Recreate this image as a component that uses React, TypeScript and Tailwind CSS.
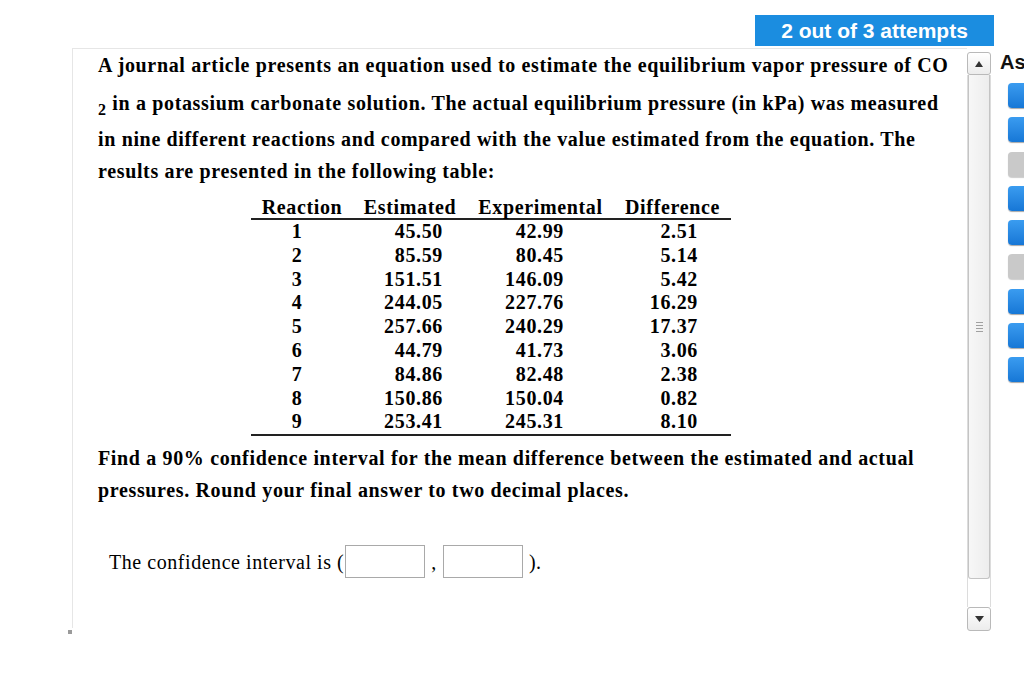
const rows = [
  ['1', '45.50', '42.99', '2.51'],
  ['2', '85.59', '80.45', '5.14'],
  ['3', '151.51', '146.09', '5.42'],
  ['4', '244.05', '227.76', '16.29'],
  ['5', '257.66', '240.29', '17.37'],
  ['6', '44.79', '41.73', '3.06'],
  ['7', '84.86', '82.48', '2.38'],
  ['8', '150.86', '150.04', '0.82'],
  ['9', '253.41', '245.31', '8.10'],
]

const sideButtons = ['blue', 'blue', 'gray', 'blue', 'blue', 'gray', 'blue', 'blue', 'blue']

function Scrollbar() {
  return (
    <div className="mt-[4px] flex h-[579px] w-[24px] shrink-0 flex-col">
      <div className="flex h-[23px] items-center justify-center rounded-[3px] border border-[#b9b9b9] bg-gradient-to-b from-white to-[#ececec]">
        <svg width="8" height="6" viewBox="0 0 8 6">
          <path d="M4 0 L8 6 L0 6 Z" fill="#333" />
        </svg>
      </div>
      <div className="flex flex-1 flex-col border-x border-[#dcdcdc] bg-white">
        <div className="flex h-[504px] items-center justify-center rounded-b-[3px] border border-t-0 border-[#c4c4c4] bg-gradient-to-r from-[#f7f7f7] to-[#ededed]">
          <div className="flex flex-col gap-[2px]">
            <div className="h-px w-[7px] bg-[#a0a0a0]" />
            <div className="h-px w-[7px] bg-[#a0a0a0]" />
            <div className="h-px w-[7px] bg-[#a0a0a0]" />
            <div className="h-px w-[7px] bg-[#a0a0a0]" />
          </div>
        </div>
      </div>
      <div className="flex h-[24px] items-center justify-center rounded-[3px] border border-[#b9b9b9] bg-gradient-to-b from-white to-[#ececec]">
        <svg width="9" height="6" viewBox="0 0 9 6">
          <path d="M0 0 L9 0 L4.5 6 Z" fill="#333" />
        </svg>
      </div>
    </div>
  )
}

export default function App() {
  return (
    <div className="h-[688px] w-[1024px] overflow-hidden bg-white">
      <div className="flex justify-end pt-[15px] pr-[30px]">
        <div
          className="flex h-[31px] w-[239px] items-center justify-center bg-[#1b8de0] text-[21px] font-bold text-white"
          style={{ fontFamily: '"Liberation Sans", Arial, sans-serif' }}
        >
          2 out of 3 attempts
        </div>
      </div>

      <div className="mt-[2px] flex">
        <div className="ml-[72px] flex w-[895px] shrink-0 flex-col">
          <div
            className="h-[580px] border-t border-l border-[#e6e6e6] pl-[25px] text-[20px] tracking-[0.65px] whitespace-nowrap text-black"
            style={{ fontFamily: '"Liberation Serif", "Times New Roman", serif' }}
          >
            <div className="font-bold">
              <div className="h-[39px] pt-[1px] leading-[30px]">
                A journal article presents an equation used to estimate the equilibrium vapor pressure of CO
              </div>
              <div className="h-[36px] leading-[30px]">
                <span className="relative top-[5px] text-[16px]">2</span> in a potassium carbonate solution. The actual equilibrium pressure (in kPa) was measured
              </div>
              <div className="h-[32px] leading-[30px]">
                in nine different reactions and compared with the value estimated from the equation. The
              </div>
              <div className="h-[30px] leading-[30px]">results are presented in the following table:</div>
            </div>

            <div className="mt-[11px] ml-[153px] w-[480px] font-bold">
              <div className="grid grid-cols-[102px_114px_147px_117px] border-b-2 border-[#222] text-center leading-[21px]">
                <div>Reaction</div>
                <div>Estimated</div>
                <div>Experimental</div>
                <div>Difference</div>
              </div>
              <div className="border-b-2 border-[#222]">
                {rows.map((r) => (
                  <div key={r[0]} className="grid h-[23.8px] grid-cols-[102px_114px_147px_117px] leading-[23.8px]">
                    <div className="pr-[10px] text-center">{r[0]}</div>
                    <div className="pr-[24px] text-right">{r[1]}</div>
                    <div className="pr-[50px] text-right">{r[2]}</div>
                    <div className="pr-[33px] text-right">{r[3]}</div>
                  </div>
                ))}
              </div>
            </div>

            <div className="mt-[7px] font-bold">
              <div className="h-[32px] leading-[30px]">
                Find a 90% confidence interval for the mean difference between the estimated and actual
              </div>
              <div className="h-[30px] leading-[30px]">pressures. Round your final answer to two decimal places.</div>
            </div>

            <div className="mt-[40px] flex items-center pl-[11px] tracking-[0.55px]">
              <span>The confidence interval is (</span>
              <input type="text" className="ml-[1px] h-[33px] w-[80px] border border-[#a9a9a9] bg-white outline-none" />
              <span className="mx-[6px]">,</span>
              <input type="text" className="h-[33px] w-[80px] border border-[#a9a9a9] bg-white outline-none" />
              <span className="ml-[6px]">).</span>
            </div>
          </div>
          <div className="-ml-[4px] mt-[2px] h-[4px] w-[4px] bg-[#9a9a9a]" />
        </div>

        <Scrollbar />

        <div className="ml-[9px] flex shrink-0 flex-col">
          <div
            className="mt-[3px] text-[20px] leading-[22px] font-bold whitespace-nowrap text-[#111]"
            style={{ fontFamily: '"Liberation Sans", Arial, sans-serif' }}
          >
            As
          </div>
          <div className="mt-[10px] ml-[8px] flex flex-col gap-[9.3px]">
            {sideButtons.map((c, i) => (
              <div
                key={i}
                className={
                  c === 'blue'
                    ? 'h-[25px] w-[30px] rounded-[4px] bg-gradient-to-b from-[#3a9cf0] to-[#1677d6] shadow-[0_1px_1px_rgba(0,0,0,0.35)]'
                    : 'h-[25px] w-[30px] rounded-[4px] bg-[#c9c9c9] shadow-[0_1px_1px_rgba(0,0,0,0.2)]'
                }
              />
            ))}
          </div>
        </div>
      </div>
    </div>
  )
}
